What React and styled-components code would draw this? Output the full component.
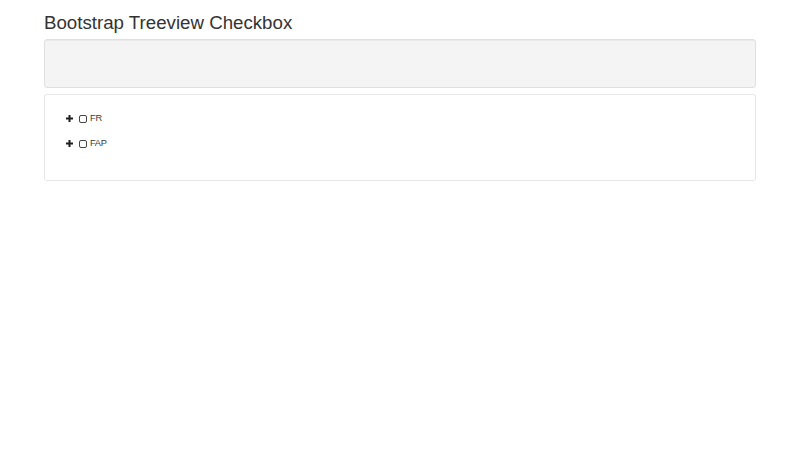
import React from "react"
import styled, { createGlobalStyle } from "styled-components"

const GlobalStyle = createGlobalStyle`
  body {
    margin: 0;
    background: #fff;
    font-family: "Liberation Sans", Arial, Helvetica, sans-serif;
    color: #333;
  }
`

const nodes = [{ id: 1, label: "FR" }, { id: 2, label: "FAP" }]

const PlusIcon = () => (
  <svg width="7" height="7" viewBox="0 0 7 7">
    <path d="M2.5 0h2v2.5H7v2H4.5V7h-2V4.5H0v-2h2.5z" fill="#1e1e1e" />
  </svg>
)

const UncheckedIcon = () => (
  <svg width="8" height="8" viewBox="0 0 8 8">
    <rect x="0.5" y="0.5" width="7" height="7" rx="1.5" fill="none" stroke="#444" strokeWidth="1" />
  </svg>
)

const TreeNode = ({ label }) => (
  <Node>
    <Toggle>
      <PlusIcon />
    </Toggle>
    <Check>
      <UncheckedIcon />
    </Check>
    <Label>{label}</Label>
  </Node>
)

export default function App() {
  return (
    <>
      <GlobalStyle />
      <Container>
        <Title>Bootstrap Treeview Checkbox</Title>
        <Well />
        <TreePanel>
          {nodes.map((n) => (
            <TreeNode key={n.id} label={n.label} />
          ))}
        </TreePanel>
      </Container>
    </>
  )
}

const Container = styled.div`
  width: 712px;
  margin: 0 44px;
`

const Title = styled.h3`
  margin: 10px 0 3px;
  font-size: 18.7px;
  font-weight: 400;
  line-height: 26px;
  color: #333;
`

const Well = styled.div`
  height: 47px;
  background: #f4f4f4;
  border: 1px solid #e0e0e0;
  border-radius: 3px;
  box-shadow: inset 0 1px 1px rgba(0, 0, 0, 0.05);
`

const TreePanel = styled.div`
  margin-top: 6px;
  padding: 11px 21px 24px;
  border: 1px solid #e6e6e6;
  border-radius: 3px;
  background: #fff;
`

const Node = styled.div`
  display: flex;
  align-items: center;
  height: 25px;
  font-size: 9.3px;
`

const Toggle = styled.span`
  display: inline-flex;
  width: 7px;
  margin-right: 6px;
`

const Check = styled.span`
  display: inline-flex;
  margin-right: 3px;
`

const Label = styled.span`
  color: #3a3a3a;
  line-height: 1;
  letter-spacing: -0.3px;
`
